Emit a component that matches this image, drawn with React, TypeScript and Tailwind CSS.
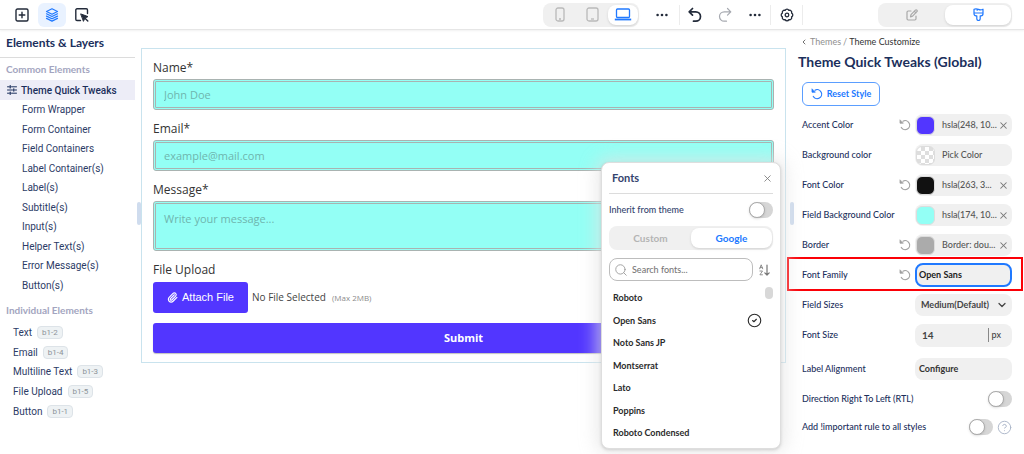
import { type ReactNode, useState } from "react";
import { ChevronDown, ChevronLeft, CircleCheck, CircleHelp, Paperclip, Search, X } from "lucide-react";
import clsx from "clsx";

const commonElements = [
  "Form Wrapper",
  "Form Container",
  "Field Containers",
  "Label Container(s)",
  "Label(s)",
  "Subtitle(s)",
  "Input(s)",
  "Helper Text(s)",
  "Error Message(s)",
  "Button(s)",
];

const individualElements = [
  { name: "Text", key: "b1-2" },
  { name: "Email", key: "b1-4" },
  { name: "Multiline Text", key: "b1-3" },
  { name: "File Upload", key: "b1-5" },
  { name: "Button", key: "b1-1" },
];

const fonts = ["Roboto", "Open Sans", "Noto Sans JP", "Montserrat", "Lato", "Poppins", "Roboto Condensed"];

export default function App() {
  const [font, setFont] = useState("Open Sans");

  return (
    <div className="relative flex min-h-screen flex-col overflow-hidden bg-white font-['Lato',sans-serif] text-[#1b2f5c]">
      <Toolbar />
      <div className="flex flex-1">
        <ElementsPanel />
        <ResizeHandle />
        <main className="min-w-0 flex-1 pt-[18px]">
          <FormPreview />
        </main>
        <ResizeHandle wide />
        <StylePanel font={font} />
      </div>
      <FontPicker font={font} onSelect={setFont} />
    </div>
  );
}

function Toolbar() {
  return (
    <header className="relative z-10 flex h-[30px] items-center border-b border-[#e6e6e6] bg-white pr-3 pl-2 shadow-[0_1px_2px_rgba(0,0,0,0.06)]">
      <div className="flex items-center gap-[1px]">
        <button aria-label="Add element" className="flex h-6 w-7 items-center justify-center">
          <AddIcon />
        </button>
        <button aria-label="Layers" className="mx-[1px] flex h-6 w-7 items-center justify-center rounded-md bg-[#e9f2ff] text-[#2079ff]">
          <LayersIcon />
        </button>
        <button aria-label="Select element" className="flex h-6 w-7 items-center justify-center">
          <SelectIcon />
        </button>
      </div>

      <div className="ml-auto flex items-center">
        <div className="flex h-6 items-center rounded-lg bg-[#f0f0f0] p-[1px] text-[#b9b9b9]">
          <button aria-label="Phone" className="flex w-8 justify-center">
            <svg width="10" height="15" viewBox="0 0 10 15" fill="none" stroke="currentColor" strokeWidth="1.3">
              <rect x="1" y="1" width="8" height="13" rx="2" />
              <path d="M4 12h2" />
            </svg>
          </button>
          <button aria-label="Tablet" className="flex w-8 justify-center">
            <svg width="13" height="15" viewBox="0 0 13 15" fill="none" stroke="currentColor" strokeWidth="1.3">
              <rect x="1" y="1" width="11" height="13" rx="2" />
              <path d="M5 12h3" />
            </svg>
          </button>
          <button aria-label="Laptop" className="flex h-5 w-[30px] items-center justify-center rounded-lg bg-white text-[#2079ff] shadow-sm">
            <svg width="18" height="13" viewBox="0 0 18 13" fill="none" stroke="currentColor" strokeWidth="1.3">
              <rect x="2.5" y="1" width="13" height="8.5" rx="1" />
              <path d="M.8 11.5h16.4" strokeWidth="1.8" />
            </svg>
          </button>
        </div>
        <button aria-label="More views" className="mr-[2px] ml-2 flex w-[30px] justify-center">
          <DotsIcon />
        </button>
        <div className="flex h-5 items-center border-l border-[#ececec]">
          <button aria-label="Undo" className="flex w-[30px] justify-center text-[#232b3a]">
            <UndoIcon />
          </button>
          <button aria-label="Redo" className="flex w-[30px] justify-center text-[#a6a9b0]">
            <UndoIcon flip />
          </button>
          <button aria-label="More actions" className="flex w-[30px] justify-center">
            <DotsIcon />
          </button>
        </div>
        <div className="flex h-5 w-[33px] items-center justify-center border-x border-[#ececec]">
          <button aria-label="Settings">
            <GearIcon />
          </button>
        </div>
      </div>

      <div className="ml-[75px] flex h-6 w-[134px] items-center rounded-lg bg-[#f0f0f0] p-[1px]">
        <button aria-label="Edit" className="flex flex-1 justify-center text-[#a8a8a8]">
          <svg width="12" height="12" viewBox="0 0 12 12" fill="none" stroke="currentColor" strokeWidth="1.2" strokeLinejoin="round" strokeLinecap="round">
            <path d="M5 2H2.2A1.2 1.2 0 0 0 1 3.2v6.6A1.2 1.2 0 0 0 2.2 11h6.6A1.2 1.2 0 0 0 10 9.8V7" />
            <path d="m4.5 7.8.5-2.2 4.400-4.400a1 1 0 0 1 1.500 1.500L6.600 7.200zM8.300 2.200l1.600 1.600" />
          </svg>
        </button>
        <button aria-label="Style" className="flex h-5 w-[66px] items-center justify-center rounded-lg bg-white text-[#2079ff] shadow-sm">
          <svg width="11" height="13" viewBox="0 0 11 13" fill="none" stroke="currentColor" strokeWidth="1.2" strokeLinejoin="round">
            <path d="M1 1.200q2.200-.8 4.500.2t4.500-.2v4.600a2 2 0 0 1-2 2H7.200v3a1.700 1.700 0 0 1-3.400 0v-3H3a2 2 0 0 1-2-2zM1 5h9M4.200 1v1.800" />
          </svg>
        </button>
      </div>
    </header>
  );
}

function ElementsPanel() {
  return (
    <aside className="w-[135px] shrink-0">
      <h2 className="h-[28px] border-b border-[#dcdcdc] pl-[6px] text-[12px] leading-[26px] font-bold">Elements &amp; Layers</h2>
      <h3 className="pl-[6px] text-[10px] leading-[22px] font-bold text-[#a3a5c0]">Common Elements</h3>
      <button className="flex h-5 w-full items-center gap-1 bg-[#ededf7] pl-[7px] font-['Roboto',sans-serif] text-[10px] font-medium">
        <SlidersIcon />
        Theme Quick Tweaks
      </button>
      <ul className="grid h-[195px] auto-rows-fr pl-[22px] font-['Roboto',sans-serif] text-[10px] text-[#2c3b66]">
        {commonElements.map((name) => (
          <li key={name} className="flex items-center">
            <button>{name}</button>
          </li>
        ))}
      </ul>
      <h3 className="pt-1 pb-[2px] pl-[6px] text-[10px] leading-[22px] font-bold text-[#a3a5c0]">Individual Elements</h3>
      <ul className="grid h-[98px] auto-rows-fr pl-[13px] font-['Roboto',sans-serif] text-[10px] text-[#2c3b66]">
        {individualElements.map((el) => (
          <li key={el.key} className="flex items-center">
            <button className="flex items-center gap-[5px]">
              {el.name}
              <span className="rounded border border-[#dde3e8] bg-[#eef2f4] px-1 text-[8px] leading-[11px] text-[#8d9299]">{el.key}</span>
            </button>
          </li>
        ))}
      </ul>
    </aside>
  );
}

function ResizeHandle({ wide = false }: { wide?: boolean }) {
  return (
    <div className={clsx("flex shrink-0 justify-end pt-[172px]", wide ? "w-[9px] pr-[1px]" : "w-[6px]")}>
      <div className="h-[23px] w-1 rounded-full bg-[#cfdcee]" />
    </div>
  );
}

function FormPreview() {
  const field =
    "block w-full rounded-[3px] border-3 border-double border-[#a9b3b1] bg-[#93fff5] px-2 text-[11px] placeholder:text-[#6fb5ae] focus:outline-none";

  return (
    <form className="border border-[#c9e3ee] px-[11px] pt-[11px] pb-[9px] font-['Open_Sans',sans-serif] text-[#333]">
      <Field id="name" label="Name*">
        <input id="name" placeholder="John Doe" className={clsx(field, "h-[31px]")} />
      </Field>
      <Field id="email" label="Email*">
        <input id="email" type="email" placeholder="example@mail.com" className={clsx(field, "h-[31px]")} />
      </Field>
      <Field id="message" label="Message*">
        <textarea id="message" placeholder="Write your message..." className={clsx(field, "h-[50px] resize-none pt-[7px]")} />
      </Field>
      <p className="mb-1 text-[12px] leading-4">File Upload</p>
      <div className="flex items-center">
        <button type="button" className="flex h-[31px] w-[95px] items-center justify-center gap-1 rounded-[3px] bg-[#5236ff] font-['Liberation_Sans',sans-serif] text-[11px] text-white">
          <Paperclip size={11} strokeWidth={2.5} />
          Attach File
        </button>
        <span className="ml-1 text-[10px] text-[#444]">No File Selected</span>
        <small className="ml-[6px] text-[8px] text-[#8c8c8c]">(Max 2MB)</small>
      </div>
      <button type="button" className="mt-[10px] h-[30px] w-full rounded-[3px] bg-[#5236ff] text-[11px] font-bold text-white shadow-[0_1px_1px_rgba(0,0,0,0.25)]">
        Submit
      </button>
    </form>
  );
}

function Field({ id, label, children }: { id: string; label: string; children: ReactNode }) {
  return (
    <div className="mb-[11px]">
      <label htmlFor={id} className="mb-[3px] block text-[12px] leading-4">
        {label}
      </label>
      {children}
    </div>
  );
}

function StylePanel({ font }: { font: string }) {
  return (
    <aside className="w-[229px] shrink-0 pr-3 pl-[7px] text-[9px] font-medium">
      <nav className="flex items-center gap-[2px] pt-1 text-[9px] leading-4 font-normal">
        <ChevronLeft size={8} strokeWidth={2.5} className="-ml-[2px] text-[#555]" />
        <a href="#themes" className="text-[#8f8f8f]">
          Themes
        </a>
        <span className="text-[#8f8f8f]">/</span>
        <a href="#customize" className="text-[#333]">
          Theme Customize
        </a>
      </nav>
      <h2 className="-ml-1 text-[14px] leading-6 font-bold whitespace-nowrap">Theme Quick Tweaks (Global)</h2>
      <button className="mt-2 mb-1 flex h-6 w-[78px] items-center justify-center gap-1 rounded-md border border-[#5b9eff] font-bold text-[#2079ff]">
        <ResetIcon />
        Reset Style
      </button>

      <div className="flex flex-col">
        <ColorRow label="Accent Color" value="hsla(248, 10..." swatch="bg-[#5236ff]" resettable />
        <ColorRow label="Background color" value="Pick Color" />
        <ColorRow label="Font Color" value="hsla(263, 3..." swatch="bg-[#111]" resettable />
        <ColorRow label="Field Background Color" value="hsla(174, 10..." swatch="bg-[#93fff5]" />
        <ColorRow label="Border" value="Border: dou..." swatch="bg-[#ababab]" resettable />
        <Row label="Font Family" resettable highlighted>
          <button className="h-6 w-full rounded-lg border-2 border-[#2079ff] bg-[#f0f0f0] pl-[2px] text-left font-bold text-[#222]">{font}</button>
        </Row>
        <Row label="Field Sizes" htmlFor="field-sizes">
          <div className="relative w-full">
            <select id="field-sizes" className="h-[22px] w-full appearance-none rounded-lg bg-[#f0f0f0] pl-[6px] font-bold text-[#444]">
              <option>Medium(Default)</option>
            </select>
            <ChevronDown size={12} strokeWidth={2.5} className="pointer-events-none absolute top-[5px] right-1 text-[#444]" />
          </div>
        </Row>
        <Row label="Font Size" htmlFor="font-size">
          <div className="flex h-[23px] w-full items-center rounded-lg bg-[#f0f0f0] px-[7px] text-[#444]">
            <input id="font-size" defaultValue="14" className="w-0 flex-1 text-[10px] font-bold focus:outline-none" />
            <span className="mr-[4px] border-l border-[#888] pl-[3px]">px</span>
          </div>
        </Row>
        <div className="mt-1">
          <Row label="Label Alignment">
            <button className="h-[22px] w-full rounded-lg bg-[#f0f0f0] pl-1 text-left font-bold text-[#333]">Configure</button>
          </Row>
        </div>
        <div className="flex h-[30px] items-center justify-between">
          <label htmlFor="rtl">Direction Right To Left (RTL)</label>
          <Toggle id="rtl" />
        </div>
        <div className="flex h-[26px] items-center">
          <label htmlFor="important" className="mr-auto">
            Add !important rule to all styles
          </label>
          <Toggle id="important" />
          <button aria-label="Help" className="ml-1">
            <CircleHelp size={15} strokeWidth={1.5} className="text-[#aab4c8]" />
          </button>
        </div>
      </div>
    </aside>
  );
}

function Row({
  label,
  htmlFor,
  resettable = false,
  highlighted = false,
  children,
}: {
  label: string;
  htmlFor?: string;
  resettable?: boolean;
  highlighted?: boolean;
  children: ReactNode;
}) {
  return (
    <div className="relative flex h-[30px] items-center">
      {highlighted && <div className="pointer-events-none absolute -top-[3px] -right-[11px] -bottom-[1px] -left-[15px] border-2 border-[#fb0007]" />}
      <label htmlFor={htmlFor} className="flex-1 whitespace-nowrap">
        {label}
      </label>
      {resettable && (
        <button aria-label={`Reset ${label}`} className="mr-1 text-[#a0a0a0]">
          <ResetIcon />
        </button>
      )}
      <div className="flex w-[97px] shrink-0">{children}</div>
    </div>
  );
}

function ColorRow({ label, value, swatch, resettable }: { label: string; value: string; swatch?: string; resettable?: boolean }) {
  return (
    <Row label={label} resettable={resettable}>
      <div className="flex h-[22px] w-full items-center rounded-lg bg-[#f0f0f0] px-[1px] text-[#555]">
        <button
          aria-label={`Pick ${label}`}
          className={clsx(
            "size-[19px] shrink-0 rounded-md border border-[#ddd]",
            swatch ?? "bg-[repeating-conic-gradient(#dedede_0_25%,#fff_0_50%)] bg-[length:8px_8px]",
          )}
        />
        <span className="ml-[7px] flex-1 whitespace-nowrap">{value}</span>
        {swatch && (
          <button aria-label={`Clear ${label}`} className="mr-[2px]">
            <X size={11} strokeWidth={2.2} className="text-[#777]" />
          </button>
        )}
      </div>
    </Row>
  );
}

function Toggle({ id }: { id: string }) {
  return (
    <input
      id={id}
      type="checkbox"
      className="h-4 w-6 shrink-0 appearance-none rounded-full bg-[#d6d6d6] before:block before:size-4 before:rounded-full before:border before:border-[#aaa] before:bg-white before:shadow-sm checked:bg-[#2079ff] checked:before:ml-2"
    />
  );
}

function FontPicker({ font, onSelect }: { font: string; onSelect: (font: string) => void }) {
  return (
    <section className="absolute top-[162px] right-[243px] z-20 w-[180px] rounded-lg border border-[#dedede] bg-white px-[7px] pb-1 shadow-[0_0_18px_4px_rgba(225,225,225,0.75),0_1px_3px_rgba(0,0,0,0.25)]">
      <div className="flex h-[31px] items-center justify-between border-b border-[#dcdcdc] pl-[3px]">
        <h3 className="text-[11px] font-bold text-[#33436e]">Fonts</h3>
        <button aria-label="Close">
          <X size={11} strokeWidth={1.8} className="text-[#777]" />
        </button>
      </div>
      <div className="flex h-8 items-center justify-between text-[9px] font-medium text-[#33436e]">
        <label htmlFor="inherit">Inherit from theme</label>
        <Toggle id="inherit" />
      </div>
      <div className="flex h-6 items-center rounded-lg bg-[#f0f0f0] p-[1px] text-[10px] font-bold">
        <button className="flex-1 text-[#b4b4b4]">Custom</button>
        <button className="h-5 flex-1 rounded-lg bg-white text-[#2079ff] shadow-sm">Google</button>
      </div>
      <div className="mt-2 flex items-center gap-[6px]">
        <div className="flex h-[23px] flex-1 items-center gap-1 rounded-lg border border-[#bdbdbd] px-1">
          <Search size={14} strokeWidth={1.5} className="text-[#999]" />
          <input aria-label="Search fonts" placeholder="Search fonts..." className="w-0 flex-1 text-[9px] font-medium placeholder:text-[#777] focus:outline-none" />
        </div>
        <button aria-label="Sort" className="mr-[3px]">
          <SortIcon />
        </button>
      </div>
      <div className="mt-[6px] flex justify-between">
        <ul className="grid h-[157px] flex-1 auto-rows-fr">
          {fonts.map((name) => (
            <li key={name} className="flex">
              <button
                onClick={() => onSelect(name)}
                className="flex flex-1 items-center justify-between pr-[3px] pl-1 text-[9px] font-bold text-[#2b2b2b]"
              >
                {name}
                {name === font && <CircleCheck size={15} strokeWidth={1.8} />}
              </button>
            </li>
          ))}
        </ul>
        <div className="h-3 w-2 rounded-full bg-[#d8d8d8]" />
      </div>
    </section>
  );
}

function AddIcon() {
  return (
    <svg width="14" height="14" viewBox="0 0 14 14" fill="none" stroke="#232b3a" strokeWidth="1.4" strokeLinecap="round">
      <rect x="1" y="1" width="12" height="12" rx="1.5" />
      <path d="M7 4.200v5.600M4.200 7h5.600" />
    </svg>
  );
}

function LayersIcon() {
  return (
    <svg width="14" height="14" viewBox="0 0 14 14" fill="none" stroke="currentColor" strokeWidth="1.2" strokeLinejoin="round" strokeLinecap="round">
      <path d="m7 .8 5.500 2.700L7 6.200 1.500 3.500z" />
      <path d="m1.500 5.800 5.500 2.700 5.500-2.700M1.500 8.100 7 10.800l5.500-2.700M1.500 10.400 7 13.100l5.500-2.700" />
    </svg>
  );
}

function SelectIcon() {
  return (
    <svg width="14" height="14" viewBox="0 0 14 14" fill="none" stroke="#232b3a" strokeWidth="1.4" strokeLinejoin="round" strokeLinecap="round">
      <path d="M5.500 12.500H2A1.200 1.200 0 0 1 .8 11.300V2A1.200 1.200 0 0 1 2 .8h9.300A1.200 1.200 0 0 1 12.500 2v3.500" />
      <path d="m6 6 7 2.600-3.100 1.500L8.600 13z" fill="#232b3a" strokeWidth="1" />
      <path d="m10 10.300 2.800 2.800" />
    </svg>
  );
}

function SlidersIcon() {
  return (
    <svg width="10" height="10" viewBox="0 0 10 10" fill="none" stroke="currentColor" strokeWidth="1" strokeLinecap="round">
      <path d="M.5 1.800h1.800M4.500 1.800h5M.5 5h5M7.800 5h1.700M.5 8.200h1.800M4.500 8.200h5" />
      <path d="M3.200.7v2.200M6.800 3.900v2.200M3.200 7.100v2.200" strokeWidth="1.3" />
    </svg>
  );
}

function DotsIcon() {
  return (
    <svg width="12" height="4" viewBox="0 0 12 4" fill="#232b3a">
      <circle cx="1.600" cy="2" r="1.300" />
      <circle cx="6" cy="2" r="1.300" />
      <circle cx="10.400" cy="2" r="1.300" />
    </svg>
  );
}

function UndoIcon({ flip = false }: { flip?: boolean }) {
  return (
    <svg
      width="14"
      height="16"
      viewBox="0 0 14 16"
      fill="none"
      stroke="currentColor"
      strokeWidth={flip ? 1.2 : 1.7}
      strokeLinecap="round"
      strokeLinejoin="round"
      className={clsx(flip && "-scale-x-100")}
    >
      <path d="M4.500 1.500 1.200 4.800l3.300 3.300M1.500 4.800h6.300a4.700 4.700 0 0 1 0 9.400H5.500" />
    </svg>
  );
}

function GearIcon() {
  return (
    <svg width="14" height="14" viewBox="0 0 14 14" fill="none" stroke="#232b3a" strokeWidth="1.3" strokeLinejoin="round">
      <path d="M11.600 5.100a2.100 2.100 0 0 1 0 3.800 2.100 2.100 0 0 1-2.700 2.700 2.100 2.100 0 0 1-3.800 0 2.100 2.100 0 0 1-2.700-2.700 2.100 2.100 0 0 1 0-3.800 2.100 2.100 0 0 1 2.700-2.700 2.100 2.100 0 0 1 3.800 0 2.100 2.100 0 0 1 2.700 2.700z" />
      <circle cx="7" cy="7" r="1.800" />
    </svg>
  );
}

function ResetIcon() {
  return (
    <svg width="12" height="12" viewBox="0 0 12 12" fill="none" stroke="currentColor" strokeWidth="1.2" strokeLinecap="round">
      <path d="M4 2.200A4.500 4.500 0 1 1 2.300 8.500" />
      <path d="M1 1.200v3h3z" fill="currentColor" strokeWidth=".8" strokeLinejoin="round" />
    </svg>
  );
}

function SortIcon() {
  return (
    <svg width="11" height="12" viewBox="0 0 11 12" fill="none" stroke="#777" strokeWidth="1" strokeLinecap="round" strokeLinejoin="round">
      <path d="m.7 4.800 1.500-4 1.500 4M1.200 3.600h2M.9 7h2.600L.9 10.800h2.600" strokeWidth=".8" />
      <path d="M8 1v10M5.800 8.800 8 11l2.200-2.200" strokeWidth="1.2" />
    </svg>
  );
}
